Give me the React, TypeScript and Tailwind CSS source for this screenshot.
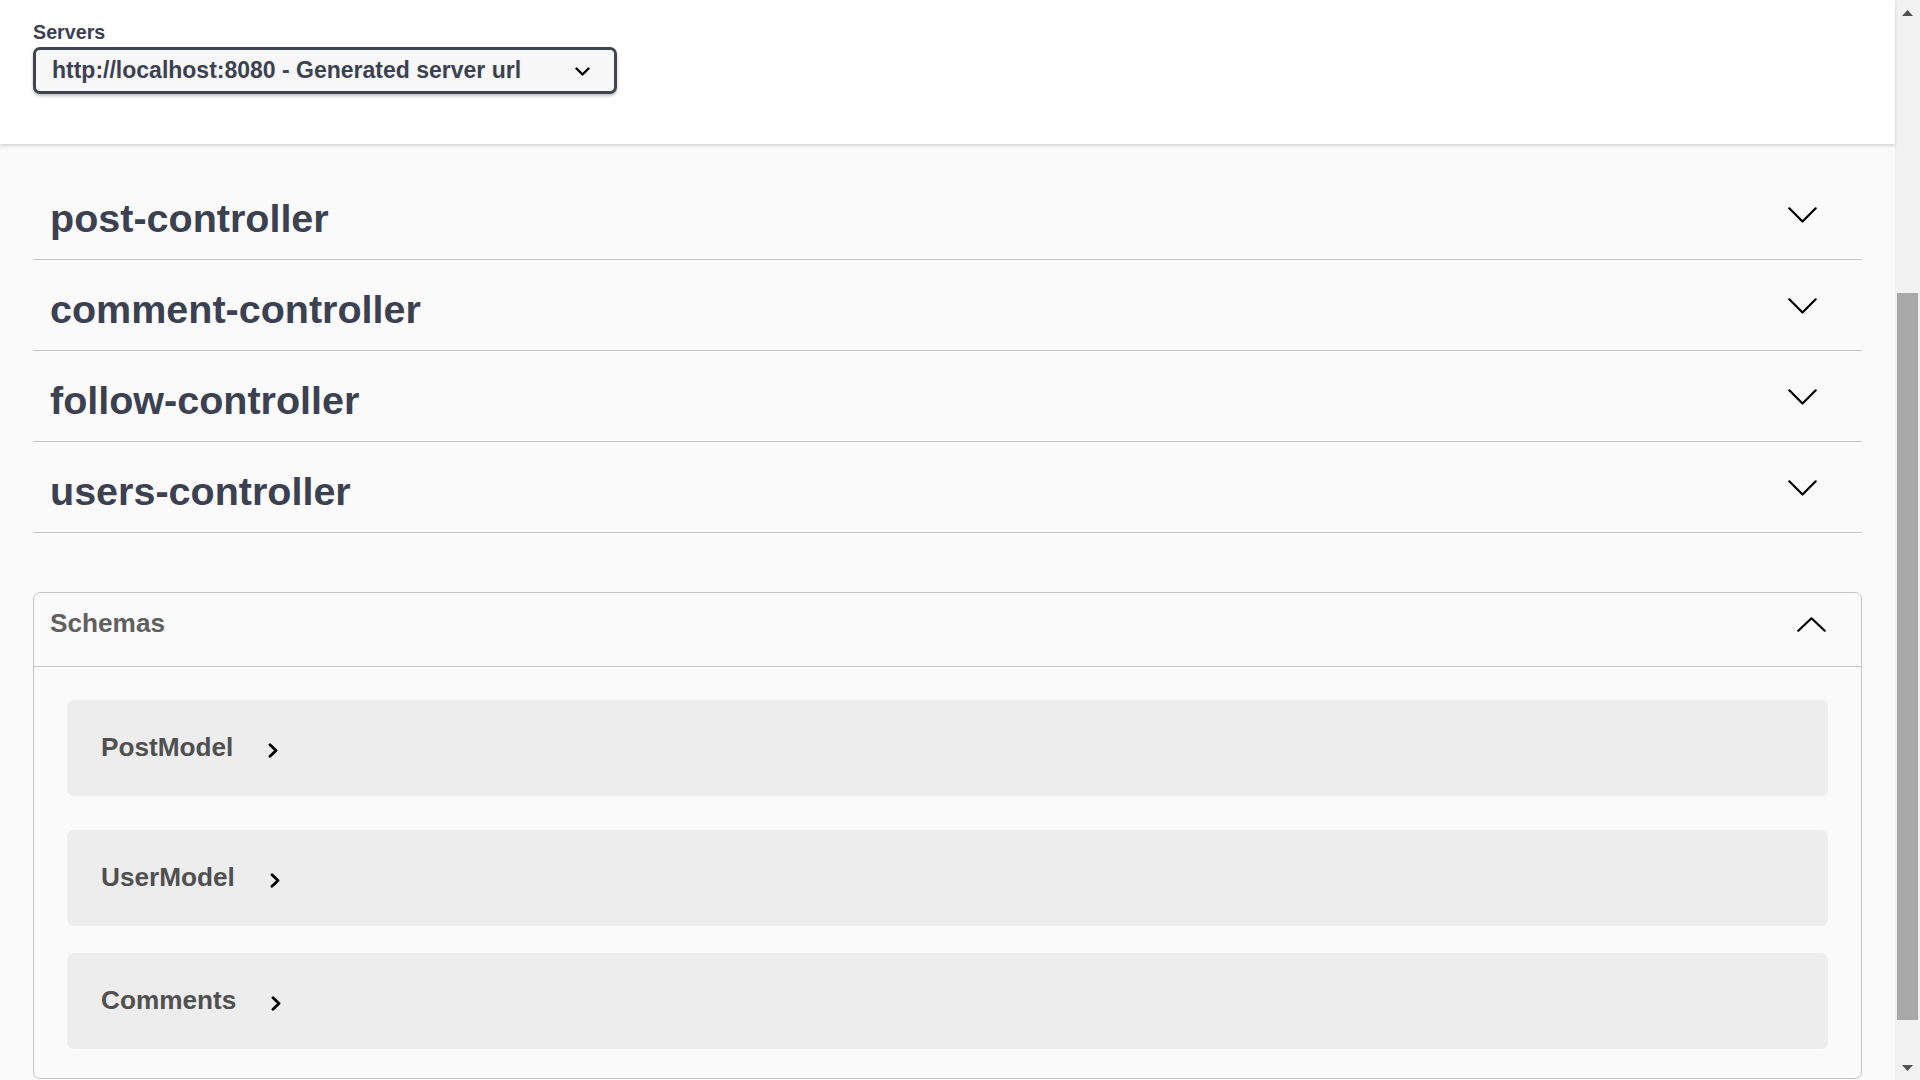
import React from 'react';

const tags = ['post-controller', 'comment-controller', 'follow-controller', 'users-controller'];

const models = [
  { name: 'PostModel', gap: 'mt-0' },
  { name: 'UserModel', gap: 'mt-[34px]' },
  { name: 'Comments', gap: 'mt-[27px]' },
];

function ChevronDown({ className }: { className?: string }) {
  return (
    <svg className={className} width="29" height="16" viewBox="0 0 29 16" fill="none">
      <polyline
        points="1.3,1.3 14.5,14.5 27.7,1.3"
        stroke="#000"
        strokeWidth="2.2"
        strokeLinecap="round"
        strokeLinejoin="round"
      />
    </svg>
  );
}

function ChevronUp({ className }: { className?: string }) {
  return (
    <svg className={className} width="29" height="15" viewBox="0 0 29 15" fill="none">
      <polyline
        points="1.3,13.7 14.5,1.3 27.7,13.7"
        stroke="#000"
        strokeWidth="2.2"
        strokeLinecap="round"
        strokeLinejoin="round"
      />
    </svg>
  );
}

function ChevronRight() {
  return (
    <svg width="10" height="15" viewBox="0 0 10 15" fill="none">
      <polyline
        points="2,1.8 8,7.5 2,13.2"
        stroke="#000"
        strokeWidth="2.8"
        strokeLinecap="round"
        strokeLinejoin="round"
      />
    </svg>
  );
}

// fake window scrollbar (page is scrolled a bit)
function Scrollbar() {
  return (
    <aside className="flex w-[25px] shrink-0 flex-col bg-[#f1f1f1]">
      <div className="flex h-[25px] items-center justify-center">
        <svg width="11" height="6" viewBox="0 0 11 6">
          <polygon points="5.5,0 11,6 0,6" fill="#505050" />
        </svg>
      </div>
      <div className="flex-1 px-[2px]">
        <div className="mt-[268px] h-[727px] bg-[#a8a8a8]" />
      </div>
      <div className="flex h-[25px] items-center justify-center">
        <svg width="11" height="6" viewBox="0 0 11 6">
          <polygon points="0,0 11,0 5.5,6" fill="#505050" />
        </svg>
      </div>
    </aside>
  );
}

export default function App() {
  return (
    <div className="flex h-[1080px] w-full overflow-hidden bg-[#fafafa] font-['Liberation_Sans',Arial,sans-serif] text-[#3b4151]">
      <main className="min-w-0 flex-1">
        {/* servers bar */}
        <div className="relative h-[144px] bg-white px-[33px] pt-[21px] shadow-[0_2px_3px_0_rgba(0,0,0,0.15)]">
          <div className="text-[19.7px] font-bold leading-[23px]">Servers</div>
          <div className="mt-[3px] flex h-[47px] w-[584px] items-center justify-between rounded-[7px] border-[3px] border-[#41444e] bg-[#f7f7f7] pl-[16px] pr-[24px] shadow-[0_2px_3px_0_rgba(0,0,0,0.25)]">
            <span className="text-[23px] font-bold">http://localhost:8080 - Generated server url</span>
            <svg className="mt-[2px]" width="15" height="9" viewBox="0 0 15 9" fill="none">
              <polyline
                points="1.5,1.5 7.5,7.5 13.5,1.5"
                stroke="#000"
                strokeWidth="2.4"
                strokeLinecap="round"
                strokeLinejoin="round"
              />
            </svg>
          </div>
        </div>

        <div className="px-[33px] pt-[25px]">
          {tags.map((tag) => (
            <div
              key={tag}
              className="flex h-[91px] items-center justify-between border-b border-[#c4c5c8] pl-[17px] pr-[45px] pt-[9px]"
            >
              <h3 className="text-[39.5px] font-bold">{tag}</h3>
              <ChevronDown className="mb-[7px]" />
            </div>
          ))}

          {/* schemas */}
          <section className="mt-[59px] rounded-[7px] border border-[#c4c5c8]">
            <div className="flex h-[74px] items-center justify-between border-b border-[#c4c5c8] pb-[11px] pl-[16px] pr-[35px]">
              <h4 className="text-[26.2px] font-bold text-[#606060]">Schemas</h4>
              <ChevronUp />
            </div>
            <div className="flex flex-col px-[33px] pb-[29px] pt-[33px]">
              {models.map((m) => (
                <div
                  key={m.name}
                  className={`flex h-[96px] items-center rounded-[7px] bg-[#ededed] pl-[34px] ${m.gap}`}
                >
                  <span className="text-[26.2px] font-bold text-[#505050]">{m.name}</span>
                  <span className="ml-[35px] mt-[4px] flex">
                    <ChevronRight />
                  </span>
                </div>
              ))}
            </div>
          </section>
        </div>
      </main>
      <Scrollbar />
    </div>
  );
}
